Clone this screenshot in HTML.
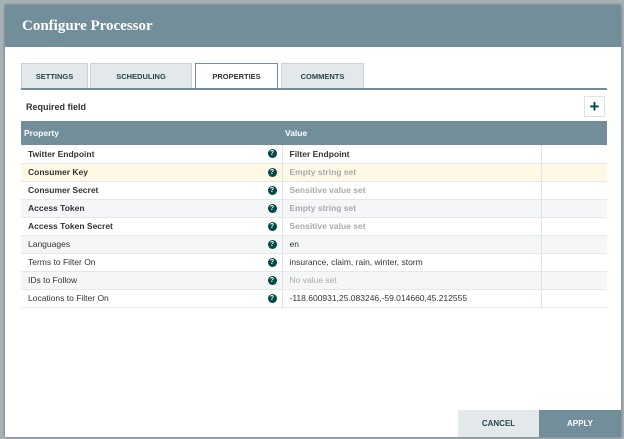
<!DOCTYPE html>
<html><head><style>
body{margin:0;width:624px;height:439px;background:#a7b2b7;font-family:"Liberation Sans",sans-serif;position:relative;overflow:hidden}
.dlg{position:absolute;left:5px;top:5px;width:616px;height:432px;background:#fff;box-shadow:0 0 3px rgba(0,0,0,.4)}
.hdr{position:absolute;left:0;top:0;width:616px;height:42px;background:#728e9b;color:#fff;font-family:"Liberation Serif",serif;font-weight:bold;font-size:15px;line-height:42px;padding-left:17px;box-sizing:border-box}
.tab{position:absolute;top:58px;height:25px;background:#e3e8eb;border:1px solid #cbd3d7;border-bottom:none;box-sizing:border-box;font-size:7.5px;color:#26484f;text-align:center;line-height:25px;font-weight:bold}
.tab.a{background:#fff;border-color:#728e9b;height:27px;color:#333}
.line{position:absolute;left:16px;top:83px;width:586px;height:2px;background:#728e9b}
.req{position:absolute;left:21px;top:97px;font-size:9px;font-weight:bold;color:#333}
.plus{position:absolute;left:579px;top:91px;width:21px;height:21px;border:1px solid #dde3e6;background:#fff;box-sizing:border-box;text-align:center;font-weight:bold;font-size:17px;line-height:20px;color:#004849}
table{position:absolute;left:16px;top:116px;width:586px;border-collapse:collapse;font-size:8.5px}
th{background:#728e9b;color:#fff;text-align:left;height:24px;padding:0 0 0 3px;font-size:8.5px}
td{height:18px;padding:0 0 0 7px;border-bottom:1px solid #e3e8eb;color:#333;box-sizing:border-box}
td.c1{width:255px;position:relative}
td.c2{width:259px;border-left:1px solid #dde3e6}
td.c3{border-left:1px solid #dde3e6}
.b{font-weight:bold}
.g{color:#aaa}
.q{position:absolute;right:5px;top:4px;width:9px;height:9px;border-radius:50%;background:#004849;color:#fff;font-size:7px;line-height:9px;text-align:center;font-weight:bold}
tr.y td{background:#fdf9e5}
tr.s td{background:#f4f6f7}
.btn{position:absolute;top:405px;height:27px;line-height:27px;text-align:center;font-size:8px;font-weight:bold}
</style></head><body>
<div class="dlg">
<div class="hdr">Configure Processor</div>
<div class="tab" style="left:16px;width:67px">SETTINGS</div>
<div class="tab" style="left:85px;width:102px">SCHEDULING</div>
<div class="tab a" style="left:190px;width:83px">PROPERTIES</div>
<div class="tab" style="left:276px;width:83px">COMMENTS</div>
<div class="line"></div>
<div class="req">Required field</div>
<div class="plus">+</div>
<table>
<tr><th style="width:258px">Property</th><th colspan="2">Value</th></tr>
<tr><td class="c1 b">Twitter Endpoint<span class="q">?</span></td><td class="c2 b">Filter Endpoint</td><td class="c3"></td></tr>
<tr class="y"><td class="c1 b">Consumer Key<span class="q">?</span></td><td class="c2 g b">Empty string set</td><td class="c3"></td></tr>
<tr><td class="c1 b">Consumer Secret<span class="q">?</span></td><td class="c2 g b">Sensitive value set</td><td class="c3"></td></tr>
<tr class="s"><td class="c1 b">Access Token<span class="q">?</span></td><td class="c2 g b">Empty string set</td><td class="c3"></td></tr>
<tr><td class="c1 b">Access Token Secret<span class="q">?</span></td><td class="c2 g b">Sensitive value set</td><td class="c3"></td></tr>
<tr class="s"><td class="c1">Languages<span class="q">?</span></td><td class="c2">en</td><td class="c3"></td></tr>
<tr><td class="c1">Terms to Filter On<span class="q">?</span></td><td class="c2">insurance, claim, rain, winter, storm</td><td class="c3"></td></tr>
<tr class="s"><td class="c1">IDs to Follow<span class="q">?</span></td><td class="c2 g">No value set</td><td class="c3"></td></tr>
<tr><td class="c1">Locations to Filter On<span class="q">?</span></td><td class="c2">-118.600931,25.083246,-59.014660,45.212555</td><td class="c3"></td></tr>
</table>
<div class="btn" style="left:453px;width:81px;background:#e3e8eb;color:#26484f">CANCEL</div>
<div class="btn" style="left:534px;width:82px;background:#728e9b;color:#fff">APPLY</div>
</div>
</body></html>
